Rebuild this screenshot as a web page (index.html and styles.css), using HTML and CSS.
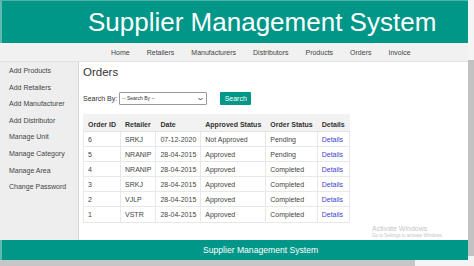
FILE: index.html
```html
<!DOCTYPE html>
<html lang="en">
<head>
  <meta charset="UTF-8">
  <title>Supplier Management System</title>
  <link rel="stylesheet" href="styles.css">
</head>
<body>
  <div class="screen">
    <div class="app">
      <div class="header">Supplier Management System</div>
      <div class="nav">
        <a href="#">Home</a>
        <a href="#">Retailers</a>
        <a href="#">Manufacturers</a>
        <a href="#">Distributors</a>
        <a href="#">Products</a>
        <a href="#">Orders</a>
        <a href="#">Invoice</a>
      </div>
      <div class="content">
        <div class="sidebar">
          <a href="#">Add Products</a>
          <a href="#">Add Retailers</a>
          <a href="#">Add Manufacturer</a>
          <a href="#">Add Distributor</a>
          <a href="#">Manage Unit</a>
          <a href="#">Manage Category</a>
          <a href="#">Manage Area</a>
          <a href="#">Change Password</a>
        </div>
        <div class="main">
          <h1>Orders</h1>
          <form class="search">
            <label>Search By:</label>
            <div class="select-wrap">
              <select><option>-- Search By --</option></select>
              <svg class="chevron" width="5" height="4" viewBox="0 0 5 4"><path d="M0.5 1 L2.5 3 L4.5 1" fill="none" stroke="#333" stroke-width="0.9"/></svg>
            </div>
            <button type="button">Search</button>
          </form>
          <table class="orders">
            <tr><th>Order ID</th><th>Retailer</th><th>Date</th><th>Approved Status</th><th>Order Status</th><th>Details</th></tr>
            <tr><td>6</td><td>SRKJ</td><td>07-12-2020</td><td>Not Approved</td><td>Pending</td><td><a href="#">Details</a></td></tr>
            <tr><td>5</td><td>NRANIP</td><td>28-04-2015</td><td>Approved</td><td>Pending</td><td><a href="#">Details</a></td></tr>
            <tr><td>4</td><td>NRANIP</td><td>28-04-2015</td><td>Approved</td><td>Completed</td><td><a href="#">Details</a></td></tr>
            <tr><td>3</td><td>SRKJ</td><td>28-04-2015</td><td>Approved</td><td>Completed</td><td><a href="#">Details</a></td></tr>
            <tr><td>2</td><td>VJLP</td><td>28-04-2015</td><td>Approved</td><td>Completed</td><td><a href="#">Details</a></td></tr>
            <tr><td>1</td><td>VSTR</td><td>28-04-2015</td><td>Approved</td><td>Completed</td><td><a href="#">Details</a></td></tr>
          </table>
          <div class="watermark">
            <div class="wm-big">Activate Windows</div>
            <div class="wm-small">Go to Settings to activate Windows.</div>
          </div>
        </div>
      </div>
      <div class="footer">Supplier Management System</div>
    </div>
    <div class="vscroll"><div class="vthumb"></div></div>
  </div>
  <div class="hscroll"><div class="hthumb"></div></div>
</body>
</html>
```

FILE: styles.css
```css
body {
  margin: 0;
  font-family: "Liberation Sans", Arial, sans-serif;
  color: #333;
  width: 474px;
  height: 266px;
  overflow: hidden;
}

.screen {
  display: flex;
  height: 260px;
}

.app {
  width: 468px;
  display: flex;
  flex-direction: column;
}

.header {
  height: 43px;
  background-color: #009688;
  color: #fff;
  font-size: 26px;
  line-height: 43px;
  padding-left: 86px;
  border-left: 2px solid #5fb9af;
  border-top: 1px solid #4fb3a8;
  box-sizing: border-box;
  white-space: nowrap;
}

.nav {
  height: 19px;
  background-color: #f1f1f1;
  display: flex;
  align-items: center;
  gap: 17px;
  padding-left: 111px;
  border-bottom: 1px solid #e2e2e2;
  box-sizing: border-box;
}

.nav a {
  color: #444;
  text-decoration: none;
  font-size: 7px;
}

.content {
  flex: 1;
  display: flex;
}

.sidebar {
  width: 78px;
  background-color: #eeeeee;
  border-right: 1px solid #d6d6d6;
  display: flex;
  flex-direction: column;
  padding-top: 1px;
}

.sidebar a {
  display: block;
  height: 16.6px;
  line-height: 16.6px;
  padding-left: 9px;
  font-size: 7px;
  color: #444;
  text-decoration: none;
  white-space: nowrap;
}

.main {
  flex: 1;
  position: relative;
  padding-left: 4px;
}

.main h1 {
  margin: 3px 0 0;
  font-size: 11.5px;
  font-weight: normal;
  color: #333;
  height: 15px;
  line-height: 15px;
}

.search {
  display: flex;
  align-items: center;
  margin-top: 11px;
  height: 14px;
  font-size: 7px;
  color: #333;
}

.search label {
  margin-right: 2px;
}

.select-wrap {
  position: relative;
  display: flex;
}

.search select {
  appearance: none;
  width: 88px;
  height: 13px;
  font-family: inherit;
  font-size: 5px;
  padding: 0 2px;
  border: 1px solid #999;
  border-radius: 1px;
  background: #fff;
  color: #333;
}

.chevron {
  position: absolute;
  right: 4px;
  top: 5px;
}

.search button {
  margin-left: 13px;
  width: 31px;
  height: 13px;
  padding: 0;
  border: none;
  border-radius: 1px;
  background-color: #009688;
  color: #fff;
  font-family: inherit;
  font-size: 7px;
}

.orders {
  margin-top: 9px;
  border-collapse: collapse;
  font-size: 7px;
  color: #444;
}

.orders th {
  background-color: #f2f2f2;
  font-weight: bold;
  text-align: left;
  vertical-align: bottom;
  height: 13px;
  padding: 0 4px 3px;
  color: #333;
  border: 1px solid #f2f2f2;
  border-bottom-color: #e4e4e4;
}

.orders td {
  height: 14.1px;
  padding: 0 4px;
  border: 1px solid #e8e8e8;
  white-space: nowrap;
}

.orders a {
  color: #3f3fcf;
  text-decoration: none;
}

.watermark {
  position: absolute;
  left: 293px;
  top: 163px;
  color: #c6c6c6;
  white-space: nowrap;
}

.wm-big {
  font-size: 7px;
}

.wm-small {
  font-size: 4.5px;
  margin-top: 1px;
}

.footer {
  height: 20px;
  background-color: #009688;
  color: #fff;
  font-size: 8.6px;
  line-height: 21px;
  padding-left: 201px;
  border-left: 2px solid #5fb9af;
  box-sizing: border-box;
}

.vscroll {
  width: 6px;
  background-color: #f4f4f4;
  padding-top: 60px;
  box-sizing: border-box;
}

.vthumb {
  height: 196px;
  background-color: #c2c2c2;
}

.hscroll {
  height: 6px;
  background-color: #f4f4f4;
}

.hthumb {
  width: 415px;
  height: 6px;
  background-color: #c6c6c6;
}
```
